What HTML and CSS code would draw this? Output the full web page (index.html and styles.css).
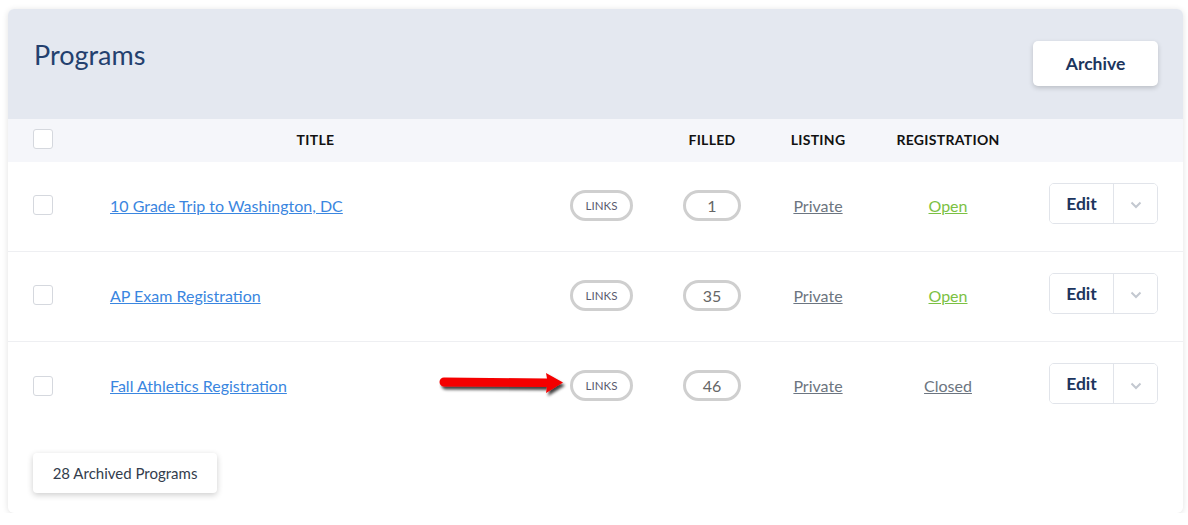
FILE: index.html
```html
<!DOCTYPE html>
<html lang="en">
<head>
    <meta charset="UTF-8">
    <title>Programs</title>
    <link rel="stylesheet" href="styles.css">
</head>
<body>
    <div class="card">
        <div class="card-header">
            <h1>Programs</h1>
            <button class="btn-archive">Archive</button>
        </div>

        <div class="row head">
            <div><span class="check"></span></div>
            <div class="col-title">Title</div>
            <div></div>
            <div class="center">Filled</div>
            <div class="center">Listing</div>
            <div class="center">Registration</div>
            <div></div>
        </div>

        <div class="row">
            <div><span class="check"></span></div>
            <div><a href="#" class="title-link">10 Grade Trip to Washington, DC</a></div>
            <div class="links-cell"><span class="pill pill-links">LINKS</span></div>
            <div class="center"><span class="pill pill-count">1</span></div>
            <div class="center"><a href="#" class="muted">Private</a></div>
            <div class="center"><a href="#" class="open">Open</a></div>
            <div class="actions">
                <div class="btn-group">
                    <button class="btn-edit">Edit</button>
                    <button class="btn-caret"><svg width="12" height="8" viewBox="0 0 12 8"><path d="M1.5 1.5 L6 6 L10.5 1.5" fill="none" stroke="#c3c8d0" stroke-width="2"/></svg></button>
                </div>
            </div>
        </div>

        <div class="row">
            <div><span class="check"></span></div>
            <div><a href="#" class="title-link">AP Exam Registration</a></div>
            <div class="links-cell"><span class="pill pill-links">LINKS</span></div>
            <div class="center"><span class="pill pill-count">35</span></div>
            <div class="center"><a href="#" class="muted">Private</a></div>
            <div class="center"><a href="#" class="open">Open</a></div>
            <div class="actions">
                <div class="btn-group">
                    <button class="btn-edit">Edit</button>
                    <button class="btn-caret"><svg width="12" height="8" viewBox="0 0 12 8"><path d="M1.5 1.5 L6 6 L10.5 1.5" fill="none" stroke="#c3c8d0" stroke-width="2"/></svg></button>
                </div>
            </div>
        </div>

        <div class="row last">
            <div><span class="check"></span></div>
            <div><a href="#" class="title-link">Fall Athletics Registration</a></div>
            <div class="links-cell">
                <!-- annotation arrow -->
                <svg class="arrow" width="130" height="30" viewBox="0 0 130 30">
                    <defs>
                        <filter id="sh" x="-10%" y="-50%" width="120%" height="200%">
                            <feDropShadow dx="2" dy="3" stdDeviation="1.5" flood-color="#000" flood-opacity="0.75"/>
                        </filter>
                    </defs>
                    <path d="M5 8.5 L108 9.5 L107 4 L124 13.5 L107 24 L108 18 L5 17.5 A4.5 4.5 0 0 1 5 8.5 Z" fill="#f50000" filter="url(#sh)"/>
                </svg>
                <span class="pill pill-links">LINKS</span>
            </div>
            <div class="center"><span class="pill pill-count">46</span></div>
            <div class="center"><a href="#" class="muted">Private</a></div>
            <div class="center"><a href="#" class="muted">Closed</a></div>
            <div class="actions">
                <div class="btn-group">
                    <button class="btn-edit">Edit</button>
                    <button class="btn-caret"><svg width="12" height="8" viewBox="0 0 12 8"><path d="M1.5 1.5 L6 6 L10.5 1.5" fill="none" stroke="#c3c8d0" stroke-width="2"/></svg></button>
                </div>
            </div>
        </div>

        <div class="card-footer">
            <button class="btn-archived">28 Archived Programs</button>
        </div>
    </div>
</body>
</html>
```

FILE: styles.css
```css
body {
    font-family: Lato, 'Open Sans', sans-serif;
    background-color: #ffffff;
    margin: 0;
    padding: 9px 5px 0 8px;
}
.card {
    width: 1175px;
    background-color: white;
    border-radius: 6px;
    box-shadow: 0 1px 6px rgba(0, 0, 0, 0.12);
    overflow: hidden;
}
.card-header {
    height: 110px;
    background-color: #e4e8f0;
    display: flex;
    justify-content: space-between;
    align-items: flex-start;
    padding: 0 25px 0 26px;
    box-sizing: border-box;
}
.card-header h1 {
    margin: 29px 0 0;
    font-size: 27px;
    font-weight: 400;
    color: #23406e;
}
.btn-archive {
    margin-top: 32px;
    width: 125px;
    height: 45px;
    padding-bottom: 2px;
    background: white;
    border: none;
    border-radius: 5px;
    box-shadow: 0 2px 5px rgba(0, 0, 0, 0.18);
    font-family: inherit;
    font-size: 17.5px;
    font-weight: 700;
    color: #1c355e;
}
.row {
    display: grid;
    grid-template-columns: 77px 428px 127px 94px 118px 142px 1fr;
    align-items: center;
    box-sizing: border-box;
    height: 90px;
    padding: 0 25px 3px;
    border-bottom: 1px solid #eeeff2;
    font-size: 16px;
}
.row.last {
    border-bottom: none;
}
.row.head {
    height: 43px;
    padding-bottom: 3px;
    background-color: #f5f6fa;
    border-bottom: none;
    font-size: 14px;
    font-weight: 700;
    text-transform: uppercase;
    letter-spacing: 0.3px;
    color: #111;
}
.col-title {
    text-align: center;
    padding-right: 17px;
}
.center {
    text-align: center;
}
.check {
    display: block;
    width: 18px;
    height: 18px;
    border: 1px solid #d5d8de;
    border-radius: 3px;
    background: white;
}
.title-link {
    color: #3a86e0;
    text-decoration: underline;
}
.links-cell {
    position: relative;
    text-align: center;
}
.pill {
    display: inline-block;
    vertical-align: middle;
    box-sizing: border-box;
    height: 31px;
    line-height: 25px;
    border: 3px solid #cfcfcf;
    border-radius: 16px;
    color: #666;
    text-align: center;
}
.pill-links {
    width: 63px;
    font-size: 11.5px;
    color: #5a5a6e;
}
.pill-count {
    width: 58px;
    font-size: 16px;
}
.muted {
    color: #6c7580;
    text-decoration: underline;
}
.open {
    color: #7bc142;
    text-decoration: underline;
}
.actions {
    display: flex;
    justify-content: flex-end;
    padding-bottom: 4px;
}
.btn-group {
    display: flex;
    height: 41px;
    border: 1px solid #e1e4ea;
    border-radius: 5px;
    box-sizing: border-box;
    overflow: hidden;
}
.btn-group button {
    background: white;
    border: none;
    font-family: inherit;
}
.btn-edit {
    width: 64px;
    border-right: 1px solid #e1e4ea !important;
    font-size: 17.5px;
    font-weight: 700;
    color: #1c355e;
}
.btn-caret {
    width: 43px;
    padding-top: 3px;
}
.arrow {
    position: absolute;
    left: -99px;
    top: 50%;
    margin-top: -17px;
}
.card-footer {
    padding: 21px 25px 20px;
}
.btn-archived {
    display: block;
    width: 184px;
    height: 40px;
    background: white;
    border: none;
    border-radius: 4px;
    box-shadow: 0 2px 6px rgba(0, 0, 0, 0.2);
    font-family: inherit;
    font-size: 15px;
    color: #333d4d;
}
```
